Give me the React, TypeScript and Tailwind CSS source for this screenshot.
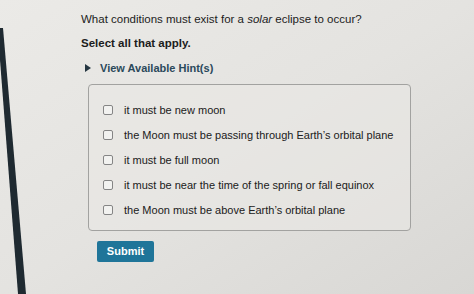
export default function App() {
  const options = [
    "it must be new moon",
    "the Moon must be passing through Earth\u2019s orbital plane",
    "it must be full moon",
    "it must be near the time of the spring or fall equinox",
    "the Moon must be above Earth\u2019s orbital plane",
  ];

  return (
    <div
      className="relative h-[294px] w-[474px] overflow-hidden bg-gradient-to-br from-[#ebeae7] via-[#e4e3e0] to-[#d8d7d4] text-[#1c1c1c]"
      style={{ fontFamily: '"Liberation Sans", Arial, sans-serif' }}
    >
      {/* screen bezel edge from the photo */}
      <svg className="absolute left-0 top-0" width="30" height="294" viewBox="0 0 30 294">
        <polygon points="0,28 3,28 26,294 18,294 0,60" fill="#1f2a31" />
      </svg>

      <div className="pl-[81px] pt-[12px]">
        <p className="text-[11.5px] leading-[14px]">
          What conditions must exist for a <em>solar</em> eclipse to occur?
        </p>
        <p className="mt-[10px] text-[11.5px] font-bold leading-[14px]">Select all that apply.</p>

        <div className="mt-[11px] flex items-center gap-[9px] pl-[4px] text-[11px] font-bold leading-[14px] text-[#2b495b]">
          <svg width="6" height="8" viewBox="0 0 6 8">
            <polygon points="0,0 6,4 0,8" fill="#263742" />
          </svg>
          <span>View Available Hint(s)</span>
        </div>

        <div className="ml-[7px] mt-[9px] w-[323px] rounded-[4px] border border-[#a2a2a0] bg-[#e9e8e5]/60 pb-[13px] pl-[14px] pt-[18px]">
          <div className="flex flex-col gap-[11px]">
            {options.map((o, i) => (
              <label key={i} className="flex items-center gap-[11px] text-[11px] leading-[14px] text-[#202020]">
                <span className="h-[10px] w-[10px] rounded-[2px] border border-[#858585] bg-[#f2f2f0]" />
                <span>{o}</span>
              </label>
            ))}
          </div>
        </div>

        <button className="ml-[16px] mt-[10px] flex h-[21px] w-[57px] items-center justify-center rounded-[2px] bg-[#1f7599] text-[11px] font-bold text-white">
          Submit
        </button>
      </div>
    </div>
  );
}
